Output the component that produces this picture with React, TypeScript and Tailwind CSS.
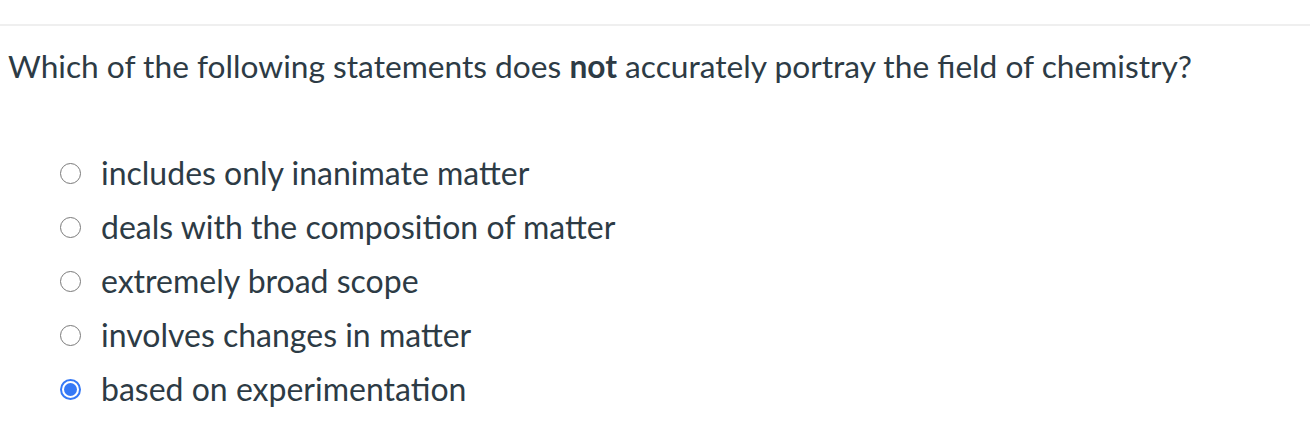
import React from "react";

const options = [
  "includes only inanimate matter",
  "deals with the composition of matter",
  "extremely broad scope",
  "involves changes in matter",
  "based on experimentation",
];

function Radio({ checked }: { checked: boolean }) {
  if (checked) {
    return (
      <span className="flex h-[21px] w-[21px] shrink-0 items-center justify-center rounded-full border-[2px] border-[#3478f6] bg-white">
        <span className="h-[13px] w-[13px] rounded-full bg-[#3478f6]" />
      </span>
    );
  }
  return <span className="h-[21px] w-[21px] shrink-0 rounded-full border-[1.5px] border-[#7a7a7a] bg-white" />;
}

export default function App() {
  return (
    <div className="h-[428px] w-[1310px] bg-white font-['Lato',sans-serif] text-[#2d3b45]">
      <div className="h-[24px]" />
      <div className="border-t-2 border-[#efefef]">
        <p className="pl-[8px] pt-[20px] text-[31.7px] leading-[40px]">
          Which of the following statements does <strong className="font-bold">not</strong> accurately portray the field of chemistry?
        </p>
        <div className="mt-[60px] flex flex-col pl-[60px]">
          {options.map((o, i) => (
            <label key={o} className="flex h-[54px] items-center gap-[20px] text-[32px]">
              <Radio checked={i === 4} />
              <span>{o}</span>
            </label>
          ))}
        </div>
      </div>
    </div>
  );
}
